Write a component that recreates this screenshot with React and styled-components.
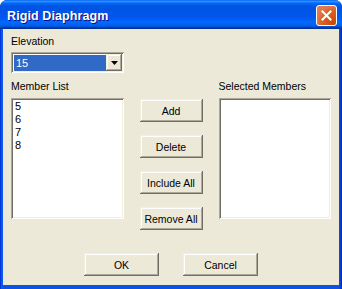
import React from "react";
import { styled, createGlobalStyle } from "styled-components";

const Global = createGlobalStyle`
  html, body {
    margin: 0;
    padding: 0;
    background: #ffffff;
  }
`;

const Window = styled.div`
  width: 342px;
  height: 289px;
  box-sizing: border-box;
  display: flex;
  flex-direction: column;
  background: linear-gradient(to right, #0019cf 0, #0855dd 1px, #0d5ff0 2px, #0a53e6 3px, #0a53e6 339px, #0a47d9 340px, #0038c8 341px, #001ea0 342px);
  border-radius: 7px 7px 0 0;
  overflow: hidden;
  font-family: "Liberation Sans", Arial, sans-serif;
  font-size: 10.5px;
  color: #000;
`;

const TitleBar = styled.div`
  height: 29px;
  flex: none;
  display: flex;
  align-items: center;
  justify-content: space-between;
  padding: 0 5px 0 7px;
  box-sizing: border-box;
  background: linear-gradient(
    to bottom,
    #0058ee 0%,
    #3593ff 4%,
    #288eff 6%,
    #127dff 8%,
    #036ffc 10%,
    #0262ee 14%,
    #0057e5 20%,
    #0054e3 24%,
    #0055eb 56%,
    #005bf5 66%,
    #026afe 76%,
    #0062ef 86%,
    #0052d6 92%,
    #0040ab 94%,
    #003092 100%
  );
`;

const Title = styled.span`
  color: #ffffff;
  font-weight: bold;
  font-size: 12.5px;
  letter-spacing: 0.1px;
  padding-top: 2px;
  text-shadow: 1px 1px #0f1089;
`;

const CloseButton = styled.div`
  width: 21px;
  height: 21px;
  box-sizing: border-box;
  border: 1px solid #ffffff;
  border-radius: 3px;
  background: radial-gradient(circle at 90% 90%, #cc4600 0%, #dc6527 55%, #e0754a 70%, #e97f5c 100%);
  display: flex;
  align-items: center;
  justify-content: center;
  margin-top: 2px;
`;

const Client = styled.div`
  flex: 1;
  margin: 0 3px 4px 3px;
  background: #ece9d8;
  padding: 6px 8px 0;
  display: flex;
  flex-direction: column;
`;

const Label = styled.div`
  height: 13px;
  line-height: 13px;
  white-space: nowrap;
`;

const Field = styled.div`
  display: flex;
  flex-direction: column;
  gap: 4px;
  width: 113px;
`;

const Sunken = styled.div`
  box-sizing: border-box;
  background: #ffffff;
  box-shadow: inset 1px 1px #aca899, inset -1px -1px #ffffff, inset 2px 2px #716f64,
    inset -2px -2px #f1efe2;
`;

const Combo = styled(Sunken)`
  height: 21px;
  padding: 3px 2px 2px 3px;
  display: flex;
`;

const ComboValue = styled.div`
  flex: 1;
  background: #316ac5;
  color: #ffffff;
  line-height: 16px;
  height: 16px;
  padding-left: 2px;
  font-size: 11px;
`;

const ComboArrow = styled.div`
  width: 16px;
  height: 17px;
  margin-top: -1px;
  box-sizing: border-box;
  background: #ece9d8;
  box-shadow: inset -1px -1px #716f64, inset 1px 1px #f1efe2, inset -2px -2px #aca899,
    inset 2px 2px #ffffff;
  display: flex;
  align-items: center;
  justify-content: center;
`;

const ListsRow = styled.div`
  margin-top: 7px;
  display: flex;
  gap: 16px;
`;

const Column = styled.div`
  width: ${(p) => p.$width}px;
  display: flex;
  flex-direction: column;
  gap: ${(p) => p.$gap}px;
  padding-top: ${(p) => p.$top || 0}px;
`;

const ListBox = styled(Sunken)`
  height: ${(p) => p.$height}px;
  padding: 2px 2px 2px 4px;
`;

const ListItem = styled.div`
  height: 13px;
  line-height: 13px;
  font-size: 11px;
`;

const Button = styled.button`
  width: ${(p) => p.$width || 63}px;
  height: 23px;
  border: none;
  padding: 0;
  background: #ece9d8;
  font-family: "Liberation Sans", Arial, sans-serif;
  font-size: 10.5px;
  color: #000;
  box-shadow: inset -1px -1px #716f64, inset 1px 1px #f1efe2, inset -2px -2px #aca899,
    inset 2px 2px #ffffff;
`;

const Footer = styled.div`
  margin-top: 23px;
  display: flex;
  justify-content: center;
  gap: 24px;
`;

const members = ["5", "6", "7", "8"];
const actions = ["Add", "Delete", "Include All", "Remove All"];

export default function App() {
  return (
    <>
      <Global />
      <Window>
        <TitleBar>
          <Title>Rigid Diaphragm</Title>
          <CloseButton>
            <svg width="11" height="11" viewBox="0 0 11 11">
              <path d="M1.5 1.5 L9.5 9.5 M9.5 1.5 L1.5 9.5" stroke="#ffffff" strokeWidth="2" strokeLinecap="square" />
            </svg>
          </CloseButton>
        </TitleBar>
        <Client>
          <Field>
            <Label>Elevation</Label>
            <Combo>
              <ComboValue>15</ComboValue>
              <ComboArrow>
                <svg width="7" height="4" viewBox="0 0 7 4">
                  <path d="M0 0 H7 L3.5 4 Z" fill="#000" />
                </svg>
              </ComboArrow>
            </Combo>
          </Field>
          <ListsRow>
            <Column $width={113} $gap={5}>
              <Label>Member List</Label>
              <ListBox $height={121}>
                {members.map((m) => (
                  <ListItem key={m}>{m}</ListItem>
                ))}
              </ListBox>
            </Column>
            <Column $width={63} $gap={13} $top={19}>
              {actions.map((a) => (
                <Button key={a}>{a}</Button>
              ))}
            </Column>
            <Column $width={113} $gap={5}>
              <Label>Selected Members</Label>
              <ListBox $height={121} />
            </Column>
          </ListsRow>
          <Footer>
            <Button $width={75}>OK</Button>
            <Button $width={75}>Cancel</Button>
          </Footer>
        </Client>
      </Window>
    </>
  );
}
